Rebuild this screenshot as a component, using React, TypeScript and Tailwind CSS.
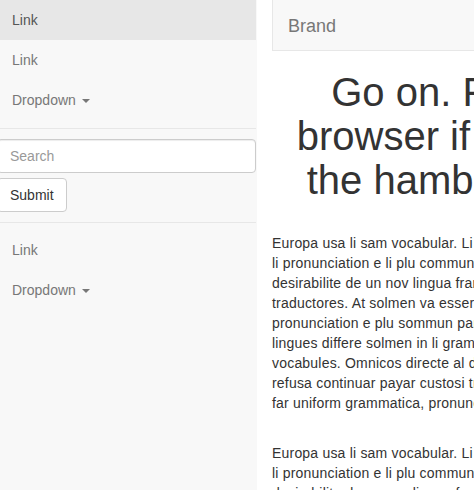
import React from 'react';

const CYCLE =
  'Europa usa li sam vocabular. Li lingues differe solmen in li grammatica, li pronunciation e li plu commun vocabules. Omnicos directe al desirabilite de un nov lingua franca: On refusa continuar payar custosi traductores. At solmen va esser necessi far uniform grammatica, pronunciation e plu sommun paroles.';
const LOREM = `${CYCLE} ${CYCLE}`;

function Caret() {
  return (
    <span className="ml-[6px] inline-block h-0 w-0 border-x-[4px] border-t-[4px] border-x-transparent border-t-current align-middle" />
  );
}

function NavItem({ label, active, dropdown }: { label: string; active?: boolean; dropdown?: boolean }) {
  return (
    <li>
      <a
        href="#"
        className={
          active
            ? 'block bg-[#e7e7e7] px-[15px] py-[10px] text-[#555]'
            : 'block px-[15px] py-[10px] text-[#777]'
        }
      >
        {label}
        {dropdown && <Caret />}
      </a>
    </li>
  );
}

export default function App() {
  return (
    <div className="flex h-[490px] w-[474px] overflow-hidden bg-white font-['Liberation_Sans',Arial,sans-serif] text-[14px] leading-[20px] text-[#333]">
      {/* Offcanvas menu */}
      <aside className="w-[257px] shrink-0 overflow-hidden bg-[#f8f8f8]">
        <div className="-ml-[3px] w-[259px]">
          <ul className="mb-[7.5px]">
            <NavItem label="Link" active />
            <NavItem label="Link" />
            <NavItem label="Dropdown" dropdown />
          </ul>
          <form className="border-y border-[#e7e7e7] py-[10px]" onSubmit={(e) => e.preventDefault()}>
            <input
              type="text"
              placeholder="Search"
              className="block h-[34px] w-full rounded-[4px] border border-[#ccc] bg-white px-[12px] py-[6px] text-[14px] text-[#555] shadow-[inset_0_1px_1px_rgba(0,0,0,0.075)] outline-none placeholder:text-[#999]"
            />
            <button
              type="submit"
              className="mt-[5px] block h-[34px] rounded-[4px] border border-[#ccc] bg-white px-[12px] py-[6px] text-[14px] leading-[20px] text-[#333]"
            >
              Submit
            </button>
          </form>
          <ul className="mt-[7.5px]">
            <NavItem label="Link" />
            <NavItem label="Dropdown" dropdown />
          </ul>
        </div>
      </aside>

      {/* Page content, pushed right by the menu */}
      <main className="w-[493px] shrink-0 px-[15px]">
        <nav className="h-[51px] border-x border-b border-[#e7e7e7] bg-[#f8f8f8]">
          <a href="#" className="block px-[15px] pt-[16px] text-[18px] leading-[20px] text-[#777]">
            Brand
          </a>
        </nav>
        <h1 className="mt-[19px] mb-[31px] text-center text-[40px] leading-[44px] font-normal text-[#333]">
          Go on. Fire up your
          <br />
          browser if you desire to
          <br />
          the hamburger button.
        </h1>
        <p className="mb-[30px] tracking-[0.2px]">{LOREM}</p>
        <p className="mb-[30px] tracking-[0.2px]">{LOREM}</p>
      </main>
    </div>
  );
}
